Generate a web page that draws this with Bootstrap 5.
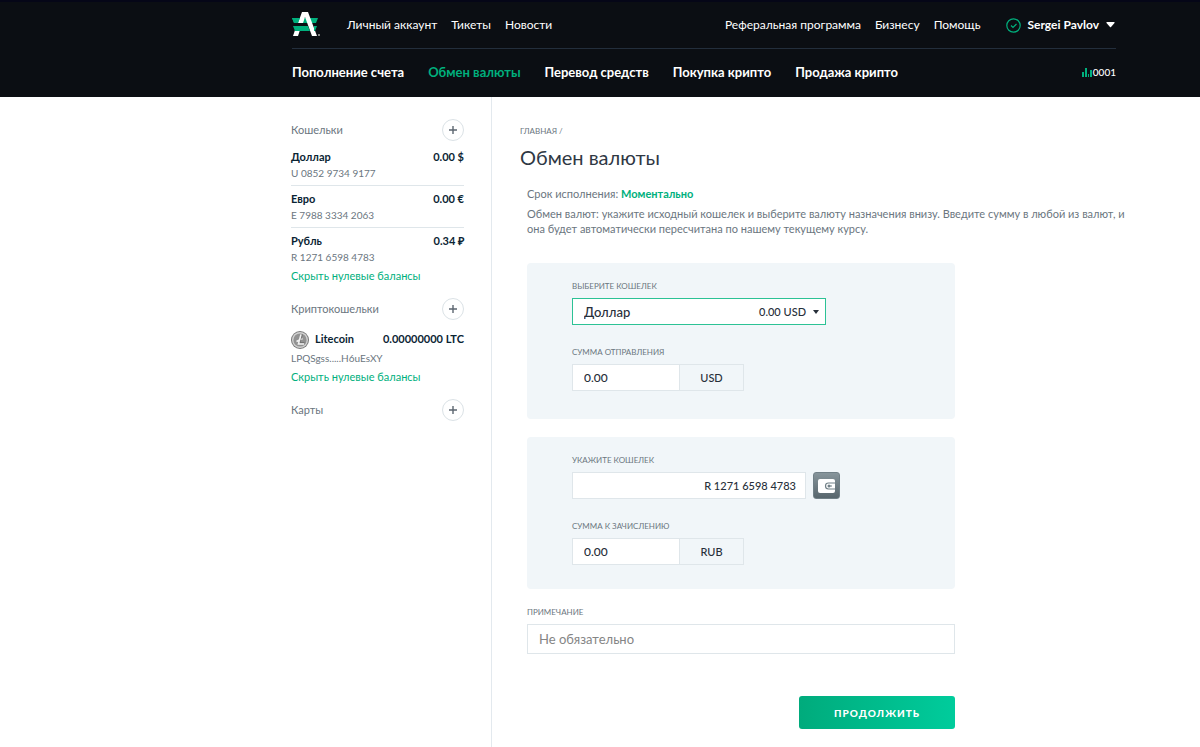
<!DOCTYPE html>
<html lang="ru">
<head>
<meta charset="utf-8">
<meta name="viewport" content="width=device-width, initial-scale=1">
<title>Обмен валюты</title>
<link href="https://cdn.jsdelivr.net/npm/bootstrap@5.3.0/dist/css/bootstrap.min.css" rel="stylesheet">
<style>
  :root { --brand: #00b07d; --ink: #0a2433; --muted: #6b7680; --line: #dfe6ea; --panel: #f1f6f9; }
  body { font-family: Lato, "Liberation Sans", sans-serif; font-size: 11px; line-height: 16px; color: var(--muted); background: #fff; }
  a { text-decoration: none; }

  .site-header { background: #0b0e13; border-top: 2px solid #050617; padding-left: 292px; padding-right: 84px; }
  .top-row { height: 47px; border-bottom: 1px solid #232e3c; }
  .top-row a { color: #fff; font-size: 12px; }
  .top-left { gap: 14px; margin-left: 26px; }
  .top-right { gap: 14px; }
  .top-row .user-link { gap: 6px; margin-left: 12px; }
  .main-row { height: 48px; padding-bottom: 2px; }
  .main-links { gap: 24px; font-size: 13px; font-weight: 700; }
  .main-links a { color: #fff; }
  .main-links a.active { color: var(--brand); }
  .stat-link { color: #fff; font-size: 10px; gap: 1px; font-weight: 500; }

  .side-col { flex: 0 0 492px; border-right: 1px solid #e3e9ee; padding: 22px 27px 22px 291px; }
  .side-head { font-size: 11px; height: 22px; }
  .add-btn { width: 22px; height: 22px; border: 1px solid #dbe2e6; border-radius: 50%; background: #fff; }
  .wallet-list { margin-top: 3px; }
  .wallet-item { padding: 5px 0 3px; border-bottom: 1px solid var(--line); }
  .wallet-item:last-child { border-bottom: 0; padding-bottom: 0; }
  .wallet-name { font-weight: 700; color: var(--ink); }
  .coin-row { margin: 9px 0 1px; gap: 6px; }
  .wallet-no { font-size: 10px; line-height: 17px; }
  .hide-link { color: var(--brand); line-height: 20px; }

  .main-col { padding: 26px 74px 18px 28px; min-width: 0; }
  .crumb { font-size: 8px; line-height: 16px; }
  .crumb a { color: var(--muted); }
  .page-title { font-size: 20px; line-height: 28px; margin: 4px 0 0; color: #2f3844; font-weight: 400; }
  .content-box { padding-left: 7px; }
  .intro { margin: 15px 0 27px; line-height: 15px; }
  .intro p { margin: 0 0 5px; }
  .intro p:last-child { margin: 0; }
  .intro b { color: var(--brand); }
  .exchange-form { max-width: 428px; }
  .panel-box { background: var(--panel); border-radius: 4px; padding: 16px 45px 28px; margin-bottom: 18px; }
  .panel-box + .panel-box { padding-bottom: 24px; margin-bottom: 16px; }
  .field + .field { margin-top: 20px; }
  .field-label { display: block; font-size: 8px; line-height: 14px; margin-bottom: 5px; text-transform: uppercase; }
  .control { height: 27px; border: 1px solid var(--line); border-radius: 0; background: #fff; color: #272f3a; padding: 0 11px; font-size: 12px; font-weight: 500; line-height: 16px; }
  .control:focus { outline: 0; border-color: var(--brand); }
  .wallet-select { width: 254px; border-color: #2cc295; padding: 0 6px 0 0; }
  .wallet-select select { border: 0; background: transparent; appearance: none; color: inherit; font-size: 13px; font-weight: 500; padding: 0 11px; outline: 0; height: 25px; min-width: 0; }
  .wallet-select .balance { font-size: 11px; margin-right: 7px; }
  .amount { width: 108px; }
  .unit { width: 65px; margin-left: -1px; height: 27px; border: 1px solid var(--line); color: #272f3a; font-weight: 500; }
  .account { width: 234px; text-align: right; font-size: 11px; padding-right: 9px; }
  .wallet-btn { width: 27px; height: 27px; margin-left: 7px; border: 1px solid #718087; border-radius: 3px; background: linear-gradient(#87959b, #58666d); }
  .note { height: 30px; width: 100%; font-size: 13px; font-weight: 400; }
  .note::placeholder { color: #858585; opacity: 1; }
  .btn-continue { margin-top: 42px; width: 156px; height: 33px; border: 0; border-radius: 3px; background: linear-gradient(90deg, #00ab7c, #00cc9c); color: #fff; font-size: 10px; font-weight: 900; letter-spacing: 1px; }
</style>
</head>
<body class="d-flex flex-column min-vh-100">

<header class="site-header">
  <div class="top-row d-flex align-items-center">
    <a href="#" aria-label="AdvCash" class="d-flex">
      <svg width="29" height="26" viewBox="0 0 29 26">
        <path fill="#00b07d" d="M0 6h26l-2 5H2z"/>
        <path fill="#fff" d="M10 0h6l9 24h-5L13 5l-2 6H6zM3 18h5l-2 6H1z"/>
        <path fill="#00b07d" d="M1 14h15l2 5H3zM22 14h3l-2 5h-1z"/>
        <path fill="#00b07d" d="M0 6h8l-2 5H2z"/>
        <circle cx="27" cy="23" r="1" fill="#aaa"/>
      </svg>
    </a>
    <nav class="top-left d-flex"><a href="#">Личный аккаунт</a><a href="#">Тикеты</a><a href="#">Новости</a></nav>
    <nav class="top-right d-flex align-items-center ms-auto">
      <a href="#">Реферальная программа</a><a href="#">Бизнесу</a><a href="#">Помощь</a>
      <a href="#" class="user-link d-flex align-items-center fw-bold">
        <svg width="15" height="15" viewBox="0 0 15 15" fill="none" stroke="#00b07d" stroke-width="1.2"><circle cx="7.500" cy="7.500" r="6.700"/><path d="M5 7.500l2 2 3.500-3.500"/></svg>
        <span>Sergei Pavlov</span>
        <svg width="11" height="6" viewBox="0 0 11 6"><path fill="#fff" d="M2 0h7q1 0 .5 1L6 5q-.5.5-1 0L1.500 1Q1 0 2 0z"/></svg>
      </a>
    </nav>
  </div>
  <div class="main-row d-flex align-items-center">
    <nav class="main-links d-flex"><a href="#">Пополнение счета</a><a href="#" class="active">Обмен валюты</a><a href="#">Перевод средств</a><a href="#">Покупка крипто</a><a href="#">Продажа крипто</a></nav>
    <a href="#" class="stat-link d-flex align-items-center ms-auto">
      <svg width="10" height="9" viewBox="0 0 10 9" fill="#00b07d"><path d="M0 4h2v5H0zM3 0h2v9H3zM6 6h1v3H6zM8 2h2v7H8z"/></svg>0001
    </a>
  </div>
</header>

<div class="d-flex flex-grow-1">
  <aside class="side-col">
    <section>
      <div class="side-head d-flex justify-content-between align-items-center">Кошельки
        <button type="button" class="add-btn d-flex align-items-center justify-content-center p-0" aria-label="Добавить кошелек"><svg width="8" height="8" viewBox="0 0 8 8"><path stroke="#5c6670" stroke-width="1.400" d="M4 0v8M0 4h8"/></svg></button>
      </div>
      <div class="wallet-list">
        <div class="wallet-item"><div class="wallet-name d-flex justify-content-between"><span>Доллар</span><span>0.00 $</span></div><div class="wallet-no">U 0852 9734 9177</div></div>
        <div class="wallet-item"><div class="wallet-name d-flex justify-content-between"><span>Евро</span><span>0.00 €</span></div><div class="wallet-no">E 7988 3334 2063</div></div>
        <div class="wallet-item"><div class="wallet-name d-flex justify-content-between"><span>Рубль</span><span>0.34 ₽</span></div><div class="wallet-no">R 1271 6598 4783</div></div>
      </div>
      <a href="#" class="hide-link d-block">Скрыть нулевые балансы</a>
    </section>
    <section class="mt-2 pt-1">
      <div class="side-head d-flex justify-content-between align-items-center">Криптокошельки
        <button type="button" class="add-btn d-flex align-items-center justify-content-center p-0" aria-label="Добавить криптокошелек"><svg width="8" height="8" viewBox="0 0 8 8"><path stroke="#5c6670" stroke-width="1.400" d="M4 0v8M0 4h8"/></svg></button>
      </div>
      <div class="wallet-name coin-row d-flex align-items-center">
        <svg width="18" height="20" viewBox="0 0 18 20"><g transform="translate(0 2)"><circle cx="9" cy="9" r="9" fill="#777"/><circle cx="9" cy="9" r="8" fill="#d2d2d2"/><circle cx="9" cy="9" r="6.600" fill="#929292"/><path fill="none" stroke="#f2f2f2" stroke-width="1.600" d="M10 3.500L7.500 13h5.500M5.500 10.500l6-3"/><path fill="none" stroke="#666" stroke-width=".7" d="M11.500 3.500L9 11.500h4.500"/></g></svg>
        <span>Litecoin</span><span class="ms-auto">0.00000000 LTC</span>
      </div>
      <div class="wallet-no">LPQSgss.....H6uEsXY</div>
      <a href="#" class="hide-link d-block">Скрыть нулевые балансы</a>
    </section>
    <section class="mt-2 pt-1">
      <div class="side-head d-flex justify-content-between align-items-center">Карты
        <button type="button" class="add-btn d-flex align-items-center justify-content-center p-0" aria-label="Добавить карту"><svg width="8" height="8" viewBox="0 0 8 8"><path stroke="#5c6670" stroke-width="1.400" d="M4 0v8M0 4h8"/></svg></button>
      </div>
    </section>
  </aside>

  <main class="main-col flex-grow-1">
    <nav class="crumb"><a href="#">ГЛАВНАЯ</a> /</nav>
    <h1 class="page-title">Обмен валюты</h1>
    <div class="content-box">
      <div class="intro">
        <p>Срок исполнения: <b>Моментально</b></p>
        <p>Обмен валют: укажите исходный кошелек и выберите валюту назначения внизу. Введите сумму в любой из валют, и она будет автоматически пересчитана по нашему текущему курсу.</p>
      </div>
      <form class="exchange-form">
        <div class="panel-box">
          <div class="field">
            <label class="field-label" for="from">Выберите кошелек</label>
            <div class="control wallet-select d-flex align-items-center">
              <select id="from" class="flex-grow-1"><option>Доллар</option><option>Евро</option><option>Рубль</option></select>
              <span class="balance">0.00 USD</span>
              <svg width="6" height="4" viewBox="0 0 6 4"><path fill="#272f3a" d="M0 0h6L3 4z"/></svg>
            </div>
          </div>
          <div class="field">
            <label class="field-label" for="send">Сумма отправления</label>
            <div class="d-flex"><input id="send" class="control amount" type="text" value="0.00"><span class="unit d-flex align-items-center justify-content-center">USD</span></div>
          </div>
        </div>
        <div class="panel-box">
          <div class="field">
            <label class="field-label" for="to">Укажите кошелек</label>
            <div class="d-flex"><input id="to" class="control account" type="text" value="R 1271 6598 4783">
              <button type="button" class="wallet-btn d-flex align-items-center justify-content-center p-0" aria-label="Выбрать кошелек">
                <svg width="17" height="14" viewBox="0 0 17 14"><rect width="17" height="14" rx="2" fill="#fff"/><path fill="#fff" stroke="#718087" stroke-width="1.200" d="M17.500 4H10.500q-3 0-3 3t3 3h7"/><circle cx="11" cy="7" r="1.500" fill="#718087"/><path stroke="#718087" d="M12 7h2"/></svg>
              </button>
            </div>
          </div>
          <div class="field">
            <label class="field-label" for="receive">Сумма к зачислению</label>
            <div class="d-flex"><input id="receive" class="control amount" type="text" value="0.00"><span class="unit d-flex align-items-center justify-content-center">RUB</span></div>
          </div>
        </div>
        <label class="field-label" for="note">Примечание</label>
        <input id="note" class="control note" type="text" placeholder="Не обязательно">
        <div class="text-end"><button type="submit" class="btn-continue">ПРОДОЛЖИТЬ</button></div>
      </form>
    </div>
  </main>
</div>
<script src="https://cdn.jsdelivr.net/npm/bootstrap@5.3.0/dist/js/bootstrap.bundle.min.js"></script>
</body>
</html>
